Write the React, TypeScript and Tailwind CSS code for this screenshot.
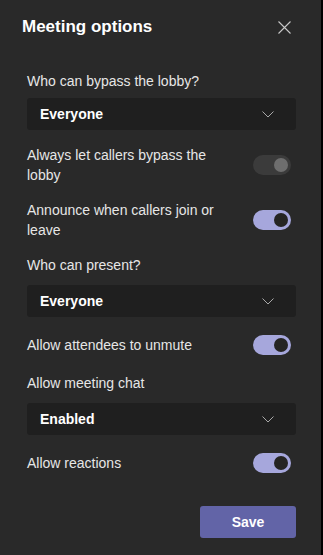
import { useState } from 'react'

const font = { fontFamily: '"Segoe UI", "Liberation Sans", Arial, sans-serif' }

function Chevron() {
  return (
    <svg width="12" height="7" viewBox="0 0 12 7" fill="none" className="text-[#a8a8a8]">
      <path d="M0.5 0.5L6 6L11.5 0.5" stroke="currentColor" strokeWidth="1" />
    </svg>
  )
}

function Select({ value }: { value: string }) {
  return (
    <div className="flex h-[32px] w-full items-center justify-between rounded-[3px] bg-[#1f1f1f] pl-[13px] pr-[22px]">
      <span className="text-[14px] font-bold text-white">{value}</span>
      <Chevron />
    </div>
  )
}

function Toggle({ on, disabled }: { on: boolean; disabled?: boolean }) {
  if (disabled) {
    return (
      <div className="flex h-[20px] w-[38px] shrink-0 items-center justify-end rounded-full bg-[#3b3b3b] pr-[3px]">
        <div className="h-[14px] w-[14px] rounded-full bg-[#6e6e6e]" />
      </div>
    )
  }
  return (
    <div
      className={`flex h-[20px] w-[38px] shrink-0 items-center rounded-full pr-[3px] ${
        on ? 'justify-end bg-[#a6a7dc]' : 'justify-start bg-[#3b3b3b]'
      }`}
    >
      <div className="h-[14px] w-[14px] rounded-full bg-[#252423]" />
    </div>
  )
}

function ToggleRow({ label, on, disabled }: { label: string; on: boolean; disabled?: boolean }) {
  return (
    <div className="flex items-center justify-between gap-4 pr-[5px]">
      <span className="max-w-[200px] text-[14px] leading-[20px] text-[#e6e6e6]">{label}</span>
      <Toggle on={on} disabled={disabled} />
    </div>
  )
}

export default function App() {
  const [announce] = useState(true)

  return (
    <div className="flex h-[555px] w-[323px] bg-black" style={font}>
      <div className="flex h-full w-[321px] flex-col bg-[#292929] pl-[27px] pr-[25px]">
        <div className="-ml-[5px] mt-[15px] flex h-[24px] items-center justify-between pr-[5px]">
          <h1 className="text-[17px] font-bold text-white">Meeting options</h1>
          <svg width="13" height="13" viewBox="0 0 13 13" className="text-[#c8c8c8]">
            <path d="M0.5 0.5L12.5 12.5M12.5 0.5L0.5 12.5" stroke="currentColor" strokeWidth="1.1" />
          </svg>
        </div>

        <p className="mt-[32px] text-[14px] leading-[20px] text-[#e6e6e6]">Who can bypass the lobby?</p>
        <div className="mt-[7px]">
          <Select value="Everyone" />
        </div>

        <div className="mt-[15px]">
          <ToggleRow label="Always let callers bypass the lobby" on disabled />
        </div>
        <div className="mt-[15px]">
          <ToggleRow label="Announce when callers join or leave" on={announce} />
        </div>

        <p className="mt-[15px] text-[14px] leading-[20px] text-[#e6e6e6]">Who can present?</p>
        <div className="mt-[10px]">
          <Select value="Everyone" />
        </div>

        <div className="mt-[18px]">
          <ToggleRow label="Allow attendees to unmute" on />
        </div>

        <p className="mt-[18px] text-[14px] leading-[20px] text-[#e6e6e6]">Allow meeting chat</p>
        <div className="mt-[10px]">
          <Select value="Enabled" />
        </div>

        <div className="mt-[18px]">
          <ToggleRow label="Allow reactions" on />
        </div>

        <div className="mt-[33px] flex justify-end">
          <button className="h-[32px] w-[96px] rounded-[3px] bg-[#6264a7] text-[14px] font-bold text-white">
            Save
          </button>
        </div>
      </div>
    </div>
  )
}
